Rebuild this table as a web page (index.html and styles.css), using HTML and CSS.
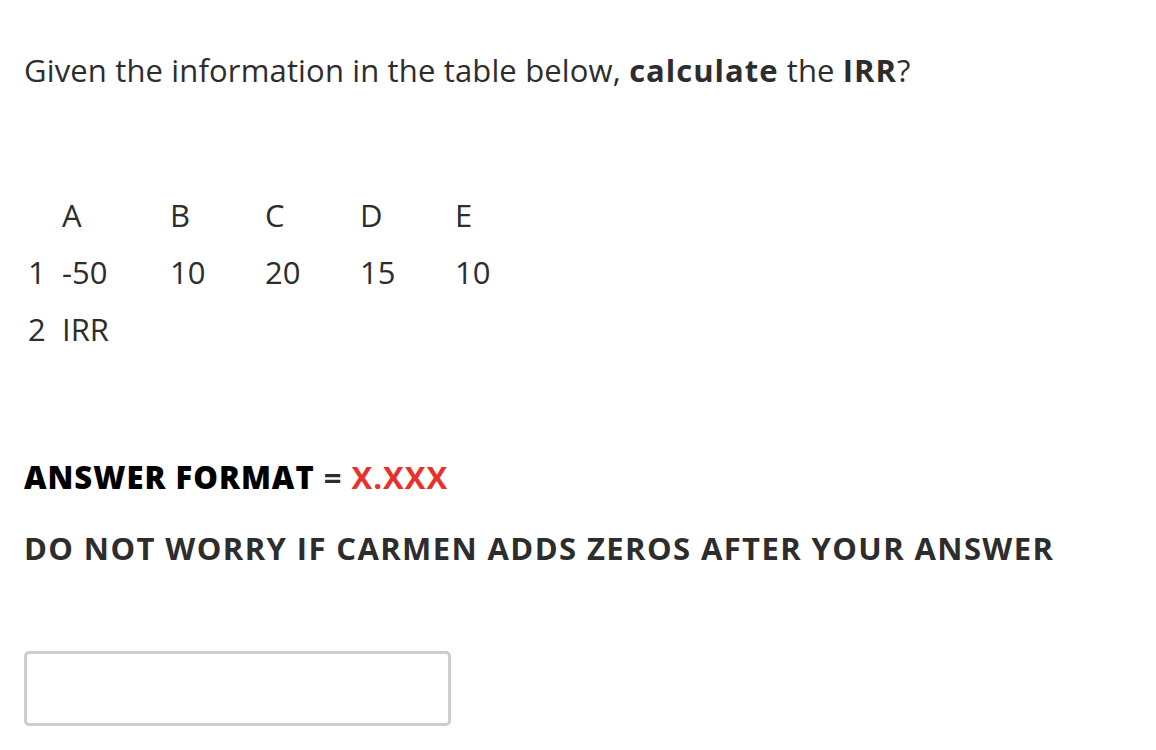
FILE: index.html
```html
<!DOCTYPE html>
<html>
<head>
<meta charset="utf-8">
<link rel="stylesheet" href="styles.css">
</head>
<body>
<div class="page">
  <p class="question">Given the information in the table below, <strong>calculate</strong> the <strong>IRR</strong>?</p>
  <div class="sheet">
    <span class="rn"></span><span>A</span><span>B</span><span>C</span><span>D</span><span>E</span>
    <span class="rn">1</span><span>-50</span><span>10</span><span>20</span><span>15</span><span>10</span>
    <span class="rn">2</span><span>IRR</span><span></span><span></span><span></span><span></span>
  </div>
  <p class="fmt"><strong class="dark">ANSWER FORMAT</strong> = <span class="red">X.XXX</span></p>
  <p class="note">DO NOT WORRY IF CARMEN ADDS ZEROS AFTER YOUR ANSWER</p>
  <input class="answer" type="text">
</div>
</body>
</html>
```
FILE: styles.css
```css
html, body {
  margin: 0;
  padding: 0;
  background: #ffffff;
}
body {
  font-family: "Open Sans", Lato, sans-serif;
  color: #2d2d2d;
  font-size: 31px;
}
.page {
  padding: 48px 24px 0 24px;
}
.question {
  margin: 0;
  line-height: 44px;
  letter-spacing: 0.15px;
}
.question strong {
  font-weight: 700;
  letter-spacing: 1px;
}
.sheet {
  margin-top: 94px;
  display: grid;
  grid-template-columns: 38px 108px 95px 95px 95px 95px;
  grid-auto-rows: 57px;
  align-items: center;
}
.sheet .rn {
  padding-left: 4px;
}
.fmt {
  margin: 98px 0 0 0;
  line-height: 44px;
  font-weight: 700;
  letter-spacing: 1px;
}
.fmt .dark {
  color: #000;
}
.fmt .red {
  color: #e8312a;
}
.note {
  margin: 27px 0 0 0;
  line-height: 44px;
  font-weight: 700;
  letter-spacing: 1.4px;
}
.answer {
  display: block;
  margin-top: 81px;
  width: 427px;
  height: 75px;
  box-sizing: border-box;
  border: 3px solid #cccccc;
  border-radius: 5px;
  background: #fff;
  padding: 0 10px;
  font: inherit;
  outline: none;
}
```
